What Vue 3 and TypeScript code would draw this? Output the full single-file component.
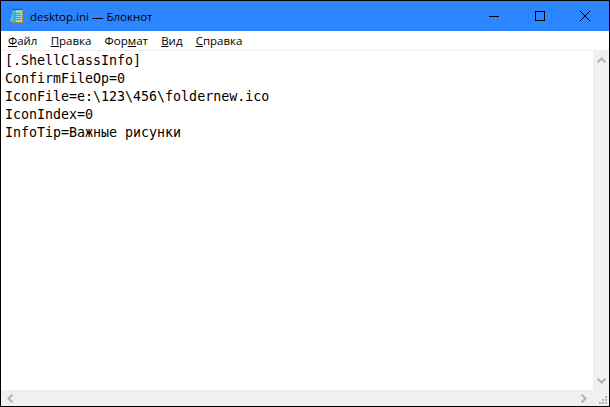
<script setup lang="ts">
const menus: [string, string, string][] = [
  ['', 'Ф', 'айл'],
  ['', 'П', 'равка'],
  ['Фор', 'м', 'ат'],
  ['', 'В', 'ид'],
  ['', 'С', 'правка'],
]
const lines = [
  '[.ShellClassInfo]',
  'ConfirmFileOp=0',
  'IconFile=e:\\123\\456\\foldernew.ico',
  'IconIndex=0',
  'InfoTip=Важные рисунки',
]
</script>

<template>
  <div class="window">
    <header class="titlebar">
      <svg class="app-icon" width="16" height="16" viewBox="0 0 16 16">
        <path d="M3.5 2.5 L1 13.5 H3.5 Z" fill="#5cc0f0" />
        <rect x="3" y="2" width="11" height="13" fill="#b9862f" />
        <rect x="3" y="2" width="10" height="12" fill="#8fdcec" />
        <rect x="3" y="2" width="4" height="12" fill="#4fb4d8" />
        <path d="M5 5.5H12M5 7.5H12M5 9.5H12M5 11.5H12" stroke="#3f9fb8" stroke-width="1" />
        <path d="M3.5 1.5H13" stroke="#333" stroke-width="1.4" stroke-dasharray="1 1" />
      </svg>
      <span class="title">desktop.ini — Блокнот</span>
      <div class="controls">
        <div class="ctl">
          <svg width="10" height="10" viewBox="0 0 10 10"><path d="M0 5.5H10" stroke="#000" fill="none" /></svg>
        </div>
        <div class="ctl">
          <svg width="10" height="10" viewBox="0 0 10 10"><rect x="0.5" y="0.5" width="9" height="9" stroke="#000" fill="none" /></svg>
        </div>
        <div class="ctl">
          <svg width="10" height="10" viewBox="0 0 10 10"><path d="M0 0L10 10M10 0L0 10" stroke="#000" fill="none" /></svg>
        </div>
      </div>
    </header>
    <nav class="menubar">
      <span v-for="m in menus" :key="m[1] + m[2]" class="menu">{{ m[0] }}<u>{{ m[1] }}</u>{{ m[2] }}</span>
    </nav>
    <div class="client">
      <div class="upper">
        <pre class="editor"><code v-for="l in lines" :key="l" class="line">{{ l }}</code></pre>
        <aside class="vscroll">
          <svg width="9" height="6" viewBox="0 0 9 6"><path d="M0.5 5.5L4.5 1.5L8.5 5.5" stroke="#b4b4b4" stroke-width="2" fill="none" /></svg>
          <svg width="9" height="6" viewBox="0 0 9 6"><path d="M0.5 0.5L4.5 4.5L8.5 0.5" stroke="#b4b4b4" stroke-width="2" fill="none" /></svg>
        </aside>
      </div>
      <div class="hscrollrow">
        <div class="hscroll">
          <svg width="6" height="9" viewBox="0 0 6 9"><path d="M5.5 0.5L1.5 4.5L5.5 8.5" stroke="#b4b4b4" stroke-width="2" fill="none" /></svg>
          <svg width="6" height="9" viewBox="0 0 6 9"><path d="M0.5 0.5L4.5 4.5L0.5 8.5" stroke="#b4b4b4" stroke-width="2" fill="none" /></svg>
        </div>
        <div class="grip">
          <svg width="8" height="8" viewBox="0 0 8 8" fill="#b4b4b4">
            <rect x="6" y="0" width="2" height="2" />
            <rect x="3" y="3" width="2" height="2" /><rect x="6" y="3" width="2" height="2" />
            <rect x="0" y="6" width="2" height="2" /><rect x="3" y="6" width="2" height="2" /><rect x="6" y="6" width="2" height="2" />
          </svg>
        </div>
      </div>
    </div>
  </div>
</template>

<style>
html, body { margin: 0; padding: 0; background: #fff; }
</style>

<style scoped>
.window {
  width: 610px;
  height: 407px;
  box-sizing: border-box;
  border: 1px solid #000;
  display: flex;
  flex-direction: column;
  background: #fff;
  font-family: "Open Sans", "Noto Sans", sans-serif;
  color: #000;
  overflow: hidden;
}
.titlebar {
  height: 30px;
  flex: none;
  background: #2b85ff;
  display: flex;
  align-items: center;
  padding-left: 8px;
}
.app-icon { flex: none; margin-right: 5px; }
.title { font-size: 11.5px; white-space: nowrap; }
.controls { margin-left: auto; display: flex; height: 100%; padding-right: 1px; }
.ctl {
  width: 45.5px;
  height: 100%;
  display: flex;
  align-items: center;
  justify-content: center;
}
.menubar {
  height: 19px;
  flex: none;
  display: flex;
  align-items: center;
  background: #fff;
  font-size: 11.5px;
  padding-left: 0.4px;
}
.menu { padding: 0 6.6px; white-space: nowrap; }
.client {
  flex: 1;
  min-height: 0;
  display: flex;
  flex-direction: column;
  border-top: 1px solid #f0f0f0;
}
.upper { flex: 1; min-height: 0; display: flex; }
.editor {
  flex: 1;
  margin: 0;
  padding: 1px 0 0 4px;
  display: flex;
  flex-direction: column;
  font-family: "DejaVu Sans Mono", "Liberation Mono", monospace;
  font-size: 13.3px;
  line-height: 18px;
}
.line { font: inherit; display: block; white-space: pre; }
.vscroll {
  width: 16px;
  flex: none;
  background: #f0f0f0;
  display: flex;
  flex-direction: column;
  justify-content: space-between;
  align-items: center;
  padding: 6px 0;
  box-sizing: border-box;
}
.hscrollrow { height: 16px; flex: none; display: flex; background: #f0f0f0; }
.hscroll {
  flex: 1;
  display: flex;
  justify-content: space-between;
  align-items: center;
  padding: 0 6px;
}
.grip {
  width: 16px;
  display: flex;
  align-items: flex-end;
  justify-content: flex-end;
  padding: 0 2px 2px 0;
  box-sizing: border-box;
}
</style>
